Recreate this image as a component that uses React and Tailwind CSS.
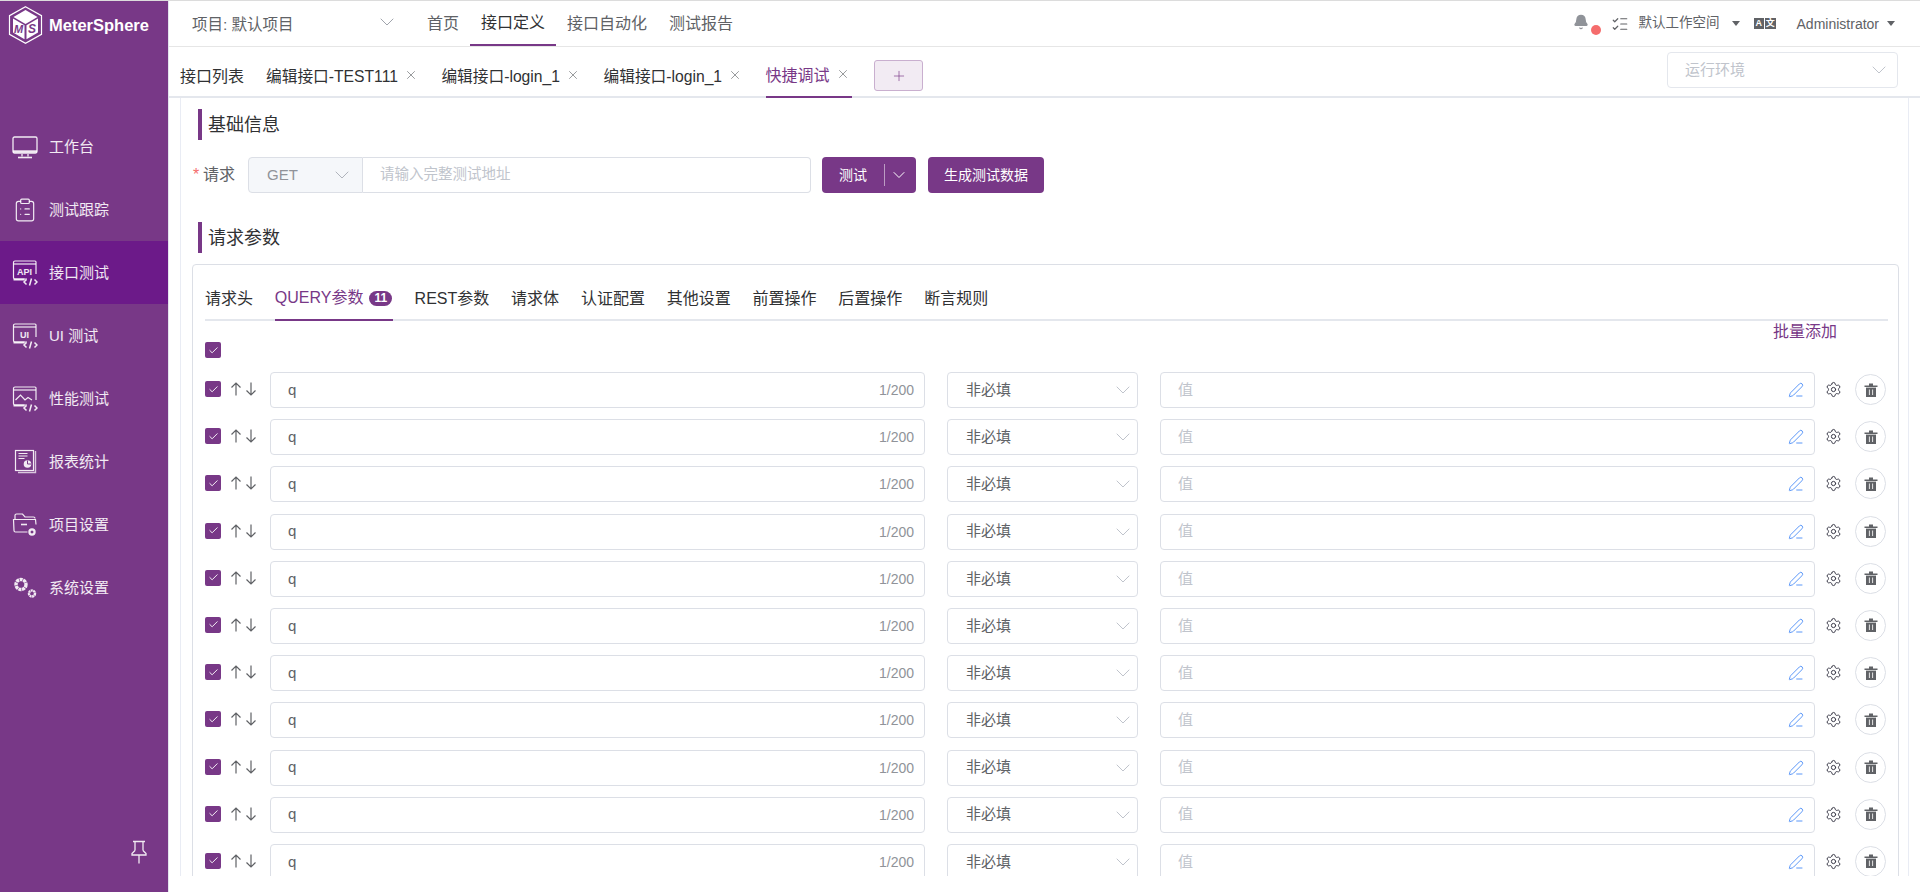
import React from 'react';
import { ChevronDown, X, Plus, Bell, ListChecks, PenLine, Settings, ClipboardList, Check } from 'lucide-react';

const Win = ({ children }) => (
  <svg width="26" height="26" viewBox="0 0 26 26" fill="none" stroke="currentColor" strokeWidth="1.2">
    <path d="M15 19H3a1.5 1.5 0 0 1-1.5-1.5V2.5A1.5 1.5 0 0 1 3 1h20a1 1 0 0 1 1 1v12" />
    <path d="M1.5 4h22.5" />
    <path d="M1.5 19.5h11" strokeWidth="2" />
    <path d="M14.5 19.5l-2.5 2.5 2.5 2.5M22.5 19.5l2.5 2.5-2.5 2.5M19.5 18.5l-2 7" strokeWidth="1.5" />
    {children}
  </svg>
);

const sideIcons = {
  monitor: (
    <svg width="26" height="26" viewBox="0 0 26 26" fill="none" stroke="currentColor" strokeWidth="1.3">
      <rect x="1" y="3" width="24" height="16" rx="1.5" />
      <path d="M1 17.5h24" strokeWidth="2.4" />
      <path d="M10 20v2.5M16 20v2.5" />
      <path d="M6 23.5h14" strokeWidth="1.6" />
    </svg>
  ),
  clip: <ClipboardList size={26} strokeWidth={1.1} />,
  api: (
    <Win>
      <text x="12.5" y="15" textAnchor="middle" fontSize="9" fontWeight="700" fill="currentColor" stroke="none">API</text>
    </Win>
  ),
  ui: (
    <Win>
      <text x="12.5" y="15" textAnchor="middle" fontSize="9" fontWeight="700" fill="currentColor" stroke="none">UI</text>
    </Win>
  ),
  perf: (
    <Win>
      <path d="M3.5 14l5-5 4.5 5 3-2.5 4 2.5" />
    </Win>
  ),
  report: (
    <svg width="26" height="26" viewBox="0 0 26 26" fill="none" stroke="currentColor" strokeWidth="1.2">
      <rect x="3.5" y="1.5" width="18" height="20" />
      <path d="M6.5 4.5h9M6.5 7h9M6.5 9.5h6" />
      <path d="M23.5 2v21.5H6" strokeWidth="1.4" opacity=".8" />
      <circle cx="15.5" cy="15" r="3.8" fill="currentColor" stroke="none" />
      <path d="M15.5 11.5v3.5h3.5" stroke="#783887" strokeWidth="1" />
    </svg>
  ),
  folder: (
    <svg width="26" height="26" viewBox="0 0 26 26" fill="none" stroke="currentColor" strokeWidth="1.2">
      <path d="M15.5 20H3.5a1.5 1.5 0 0 1-1.5-1.5L1.5 7.5h22l.5 5" />
      <path d="M3 7V3.5A1.5 1.5 0 0 1 4.5 2h6l2.5 3h8.5a1.5 1.5 0 0 1 1.5 1.5" />
      <path d="M9 12.5h6" strokeWidth="1.6" />
      <circle cx="20" cy="20" r="2.6" strokeWidth="2.2" />
    </svg>
  ),
  gears: (
    <svg width="26" height="26" viewBox="0 0 26 26" fill="none" stroke="currentColor">
      <circle cx="9" cy="9.5" r="5" strokeWidth="3.4" strokeDasharray="3 0.6" />
      <circle cx="20" cy="18.5" r="3" strokeWidth="2.4" strokeDasharray="2 0.5" />
    </svg>
  ),
};

const menu = [
  { name: '工作台', icon: 'monitor' },
  { name: '测试跟踪', icon: 'clip' },
  { name: '接口测试', icon: 'api', active: true },
  { name: 'UI 测试', icon: 'ui' },
  { name: '性能测试', icon: 'perf' },
  { name: '报表统计', icon: 'report' },
  { name: '项目设置', icon: 'folder' },
  { name: '系统设置', icon: 'gears' },
];

const Arrow = ({ down }) => (
  <svg width="12" height="14" viewBox="0 0 12 14" fill="none" stroke="#606266" strokeWidth="1.2" className={down ? 'rotate-180' : ''}>
    <path d="M6 13.5V1M1.5 5.5 6 1l4.5 4.5" />
  </svg>
);

const Chevron = ({ className }) => <ChevronDown size={24} strokeWidth={1} className={className} />;

const Checkbox = ({ className }) => (
  <span className={'flex h-4 w-4 shrink-0 items-center justify-center rounded-[2px] bg-[#783887] ' + className}>
    <Check size={11} strokeWidth={2} color="white" />
  </span>
);

const Trash = () => (
  <svg width="14" height="14" viewBox="0 0 14 14">
    <path d="M.5 2.5h13v1.6H.5zM5 .5h4v2H5z" fill="#606266" />
    <path d="M2 4.6h10V14H2z" fill="#606266" />
    <path d="M5.4 6.5v5.5M8.6 6.5v5.5" stroke="#e6e6e6" strokeWidth="1" />
  </svg>
);

const Caret = ({ className }) => <span className={'h-0 w-0 border-x-[4px] border-t-[5px] border-x-transparent border-t-[#606266] ' + className} />;

const ParamRow = () => (
  <div className="flex items-start">
    <Checkbox className="mt-[9px]" />
    <div className="ml-[7px] mt-[10px] flex w-[42px] shrink-0">
      <span className="flex w-[15px] justify-center"><Arrow /></span>
      <span className="flex w-[15px] justify-center"><Arrow down /></span>
    </div>
    <div className="flex h-9 w-[655px] shrink-0 items-center justify-between rounded border border-[#dcdfe6] pl-[17px] pr-[10px] text-[15px] text-[#606266]">
      <span>q</span>
      <span className="text-sm text-[#909399]">1/200</span>
    </div>
    <div className="ml-[22px] flex h-9 w-[191px] shrink-0 items-center justify-between rounded border border-[#dcdfe6] pl-[18px] pr-[2px] text-[15px] text-[#606266]">
      <span>非必填</span>
      <Chevron className="text-[#c0c4cc]" />
    </div>
    <div className="ml-[22px] flex h-9 w-[655px] shrink-0 items-center justify-between rounded border border-[#dcdfe6] pl-[17px] pr-[10px] text-[15px] text-[#c0c4cc]">
      <span>值</span>
      <PenLine size={16} strokeWidth={1.4} color="#4f8ff7" />
    </div>
    <Settings size={17} strokeWidth={1.4} color="#3a3a48" className="ml-[10px] mt-[9px] shrink-0" />
    <div className="ml-[13px] mt-[2px] flex h-[31px] w-[31px] shrink-0 items-center justify-center rounded-full border border-[#dcdfe6]">
      <Trash />
    </div>
  </div>
);

const tabs = ['编辑接口-TEST111', '编辑接口-login_1', '编辑接口-login_1'];
const paramTabs = ['认证配置', '其他设置', '前置操作', '后置操作', '断言规则'];

export default function App() {
  return (
    <div className="flex h-[892px] w-[1920px] overflow-hidden border-t border-[#dcdcdc] bg-white font-['Liberation_Sans','Noto_Sans_CJK_SC',sans-serif] text-base text-[#303133]">
      {/* side menu */}
      <aside className="flex w-[169px] shrink-0 flex-col border-r border-[#e2e4ee] bg-[#783887] text-white/90">
        <div className="flex h-[114px] shrink-0 items-start pl-2 pt-[5px]">
          <svg width="35" height="38" viewBox="0 0 34 38">
            <path d="M17 .7 33 9.7v18.6L17 37.3 1 28.3V9.7z" fill="none" stroke="white" strokeWidth="1.2" />
            <path d="M17 4l12 7-12 7-12-7z" fill="white" />
            <path d="M4.5 12.5l11.5 6.7v14L4.5 26.5z" fill="white" />
            <path d="M29.5 12.5L18 19.2v14l11.5-6.7z" fill="white" />
            <text x="10" y="27" textAnchor="middle" fontSize="11" fontWeight="700" fontStyle="italic" fill="#783887">M</text>
            <text x="23.5" y="27" textAnchor="middle" fontSize="12" fontWeight="700" fontStyle="italic" fill="#783887">S</text>
          </svg>
          <span className="ml-[6px] mt-[7px] text-[16.5px] font-bold leading-6 text-white">MeterSphere</span>
        </div>
        {menu.map((m) => (
          <div key={m.name} className={'flex h-[63px] shrink-0 items-center gap-[11px] pl-3 text-[15px] ' + (m.active ? 'bg-[#6c1a89]' : '')}>
            <span className="flex h-[26px] w-[26px] items-center justify-center">{sideIcons[m.icon]}</span>
            <span className="pt-[1px]">{m.name}</span>
          </div>
        ))}
        <div className="mt-auto flex justify-end pb-[28px] pr-[18px]">
          <svg width="22" height="24" viewBox="0 0 22 24" fill="none" stroke="currentColor" strokeWidth="1.3">
            <path d="M5 1.500h12M7 1.500v9M15 1.500v9M7 10.500l-3 3v1.500h14v-1.500l-3-3M11 15v8.500" />
          </svg>
        </div>
      </aside>

      <main className="flex min-w-0 flex-1 flex-col">
        {/* top bar */}
        <header className="flex h-[46px] shrink-0 items-start border-b border-[#e6e6e6] text-[#606266]">
          <div className="flex h-[45px] w-[247px] shrink-0 items-center pl-[23px]">
            <span className="pt-[2px] text-[15.5px]">项目: 默认项目</span>
            <Chevron className="ml-[81px] -mt-1 text-[#a0a4ac]" />
          </div>
          <div className="flex h-[45px] items-center px-[11px]">首页</div>
          <div className="flex h-[45px] items-center border-b-2 border-[#783887] px-[11px] text-[#303133]">接口定义</div>
          <div className="flex h-[45px] items-center px-[11px]">接口自动化</div>
          <div className="flex h-[45px] items-center px-[11px]">测试报告</div>
          <div className="ml-auto flex h-[45px] items-center pr-[25px] text-[13.5px]">
            <div className="relative -mt-[3px]">
              <Bell size={16} fill="#909399" color="#909399" />
              <span className="absolute -right-[12px] top-[11px] h-[10px] w-[10px] rounded-full bg-[#f56c6c]" />
            </div>
            <ListChecks size={18} strokeWidth={1.6} color="#606266" className="ml-[22px]" />
            <span className="ml-[10px]">默认工作空间</span>
            <Caret className="ml-3" />
            <span className="ml-[14px] flex h-[11px] w-[22px] gap-px text-[9px] font-bold leading-[11px] text-white">
              <span className="flex-1 bg-[#606266] text-center">A</span>
              <span className="flex-1 bg-[#606266] text-center">文</span>
            </span>
            <span className="ml-[21px] text-sm">Administrator</span>
            <Caret className="ml-2" />
          </div>
        </header>

        {/* open tabs */}
        <div className="flex h-[51px] shrink-0 items-start gap-[23.5px] border-b-2 border-[#e4e7ed] pl-[11px]">
          <div className="-mr-[1.5px] flex h-[51px] items-center pt-[9px]">接口列表</div>
          {tabs.map((t, i) => (
            <div key={i} className="flex h-[51px] items-center pt-[9px]">
              <span className="text-[15.7px]">{t}</span>
              <X size={14} strokeWidth={1.1} color="#606266" className="ml-[6px] -mt-1" />
            </div>
          ))}
          <div className="flex h-[51px] items-center border-b-2 border-[#783887] pt-[9px] text-[#783887]">
            <span>快捷调试</span>
            <X size={14} strokeWidth={1.1} color="#606266" className="ml-[6px] -mt-1 mr-[2px]" />
          </div>
          <button className="-ml-[1px] mt-[13px] flex h-[31px] w-[49px] items-center justify-center rounded-[3px] border border-[#c9afcf] bg-[#f2ebf3] text-[#783887]">
            <Plus size={16} strokeWidth={1} />
          </button>
          <div className="ml-auto mr-[22px] mt-[5px] flex h-9 w-[231px] items-center justify-between rounded border border-[#e4e7ed] pl-[17px] pr-[6px] text-[15px] text-[#c0c4cc]">
            <span>运行环境</span>
            <Chevron />
          </div>
        </div>

        {/* page body */}
        <div className="mr-[11px] ml-[11px] h-[778px] overflow-hidden border-x border-[#e9ecf4]">
          <div className="ml-[17px] mt-[11px] flex h-[31px] items-center border-l-4 border-[#783887] pl-[6px] text-lg">基础信息</div>

          <div className="mt-[17px] flex h-9 items-center pl-[12px]">
            <span className="w-[10px] text-[#f56c6c]">*</span>
            <span className="text-[#606266]">请求</span>
            <div className="ml-[13px] flex h-9 w-[115px] items-center justify-between rounded-l border border-[#dcdfe6] bg-[#f5f7fa] pl-[18px] pr-[8px] text-[15px] text-[#909399]">
              <span>GET</span>
              <Chevron className="text-[#b0b4bc]" />
            </div>
            <div className="flex h-9 w-[448px] items-center rounded-r border border-l-0 border-[#dcdfe6] pl-[17px] text-[14.5px] text-[#c0c4cc]">请输入完整测试地址</div>
            <div className="ml-[11px] flex h-9 w-[94px] items-center rounded bg-[#783887] text-sm text-white">
              <span className="pl-[17px]">测试</span>
              <span className="ml-[17px] h-[22px] w-px bg-white/50" />
              <ChevronDown size={20} strokeWidth={1.2} className="ml-[4px]" />
            </div>
            <div className="ml-3 flex h-9 w-[116px] items-center justify-center rounded bg-[#783887] text-sm text-white">生成测试数据</div>
          </div>

          <div className="ml-[17px] mt-[29px] flex h-[31px] items-center border-l-4 border-[#783887] pl-[6px] text-lg">请求参数</div>

          {/* request params card */}
          <div className="ml-[11px] mr-[9px] mt-[11px] rounded-t border border-[#dcdfe6] pl-3 pr-[10px] pt-4">
            <div className="flex h-10 items-start gap-[21.8px] border-b-2 border-[#e4e7ed]">
              <div className="flex h-10 items-center pb-[4px]">请求头</div>
              <div className="flex h-10 w-[118px] items-center border-b-2 border-[#783887] pb-[4px] text-[#783887]">
                <span>QUERY参数</span>
                <span className="ml-[6px] flex h-[15px] w-[23px] items-center justify-center rounded-full bg-[#783887] text-xs font-bold leading-none text-white">11</span>
              </div>
              <div className="flex h-10 items-center pb-[4px]">REST参数</div>
              <div className="flex h-10 items-center pb-[4px]">请求体</div>
              {paramTabs.map((t) => (
                <div key={t} className="flex h-10 items-center pb-[4px]">{t}</div>
              ))}
            </div>
            <div className="flex h-[21px] justify-end pr-[51px] leading-[21px] text-[#783887]">批量添加</div>
            <Checkbox />
            <div className="mt-[14px] flex flex-col gap-[11.2px]">
              {Array.from({ length: 11 }).map((_, i) => (
                <ParamRow key={i} />
              ))}
            </div>
          </div>
        </div>
      </main>
    </div>
  );
}
